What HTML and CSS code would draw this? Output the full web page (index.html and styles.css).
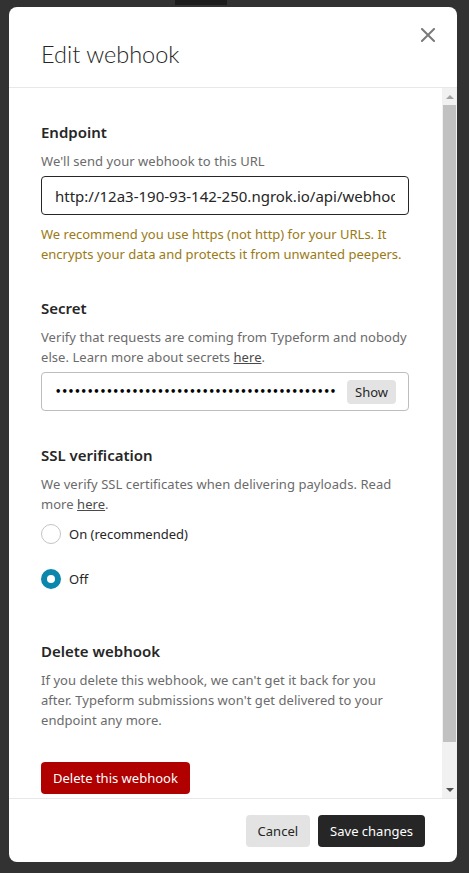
FILE: index.html
```html
<!DOCTYPE html>
<html lang="en">
<head>
    <meta charset="UTF-8">
    <meta name="viewport" content="width=device-width, initial-scale=1.0">
    <title>Edit webhook</title>
    <link rel="stylesheet" href="styles.css">
</head>
<body>

<div class="topbar"></div>

<div class="modal">
    <header class="modal-header">
        <h2 class="modal-title">Edit webhook</h2>
        <button class="close-button" aria-label="Close">
            <svg width="14" height="14" viewBox="0 0 14 14">
                <path d="M1 1 L13 13 M13 1 L1 13" stroke="#7a7a7a" stroke-width="2" stroke-linecap="square" fill="none"/>
            </svg>
        </button>
    </header>

    <div class="modal-body">
        <div class="scroll-content">
            <!-- Endpoint -->
            <section class="field">
                <h3 class="field-title">Endpoint</h3>
                <p class="field-desc">We'll send your webhook to this URL</p>
                <input class="text-input focused" type="text" value="http://12a3-190-93-142-250.ngrok.io/api/webhook">
                <p class="field-warning">We recommend you use https (not http) for your URLs. It encrypts your data and protects it from unwanted peepers.</p>
            </section>

            <!-- Secret -->
            <section class="field">
                <h3 class="field-title">Secret</h3>
                <p class="field-desc">Verify that requests are coming from Typeform and nobody else. Learn more about secrets <a href="#">here</a>.</p>
                <div class="secret-box">
                    <input class="secret-input" type="password" value="abcdefghijklmnopqrstuvwxyzabcdefghijklmnopqrstuvwxyz">
                    <button class="show-button">Show</button>
                </div>
            </section>

            <!-- SSL -->
            <section class="field ssl-field">
                <h3 class="field-title">SSL verification</h3>
                <p class="field-desc">We verify SSL certificates when delivering payloads. Read more <a href="#">here</a>.</p>
                <div class="radio-group">
                    <label class="radio">
                        <span class="radio-dot"></span>
                        On (recommended)
                    </label>
                    <label class="radio">
                        <span class="radio-dot checked"></span>
                        Off
                    </label>
                </div>
            </section>

            <!-- Delete -->
            <section class="field delete-field">
                <h3 class="field-title">Delete webhook</h3>
                <p class="field-desc">If you delete this webhook, we can't get it back for you after. Typeform submissions won't get delivered to your endpoint any more.</p>
                <button class="button danger">Delete this webhook</button>
            </section>
        </div>

        <div class="scrollbar">
            <div class="scroll-arrow up"></div>
            <div class="scroll-track">
                <div class="scroll-thumb"></div>
            </div>
            <div class="scroll-arrow down"></div>
        </div>
    </div>

    <footer class="modal-footer">
        <button class="button secondary">Cancel</button>
        <button class="button primary">Save changes</button>
    </footer>
</div>

</body>
</html>
```

FILE: styles.css
```css
html, body {
    margin: 0;
    height: 100%;
}

body {
    background-color: #323232;
    font-family: "Noto Sans", "Open Sans", sans-serif;
    color: #262626;
    padding: 7px 12px 11px 9px;
    box-sizing: border-box;
    position: relative;
}

.topbar {
    position: absolute;
    top: 0;
    left: 175px;
    width: 52px;
    height: 5px;
    background-color: #1c1c1c;
}

.modal {
    position: relative;
    width: 448px;
    height: 855px;
    background-color: #fff;
    border-radius: 8px;
    display: flex;
    flex-direction: column;
    overflow: hidden;
}

.modal-header {
    height: 80px;
    flex-shrink: 0;
    display: flex;
    justify-content: space-between;
    align-items: flex-start;
    padding: 0 22px 0 32px;
    border-bottom: 1px solid #e8e8e8;
}

.modal-title {
    margin: 32px 0 0 0;
    font-family: Lato, sans-serif;
    font-weight: 300;
    font-size: 23.5px;
    line-height: 30px;
    color: #262626;
}

.close-button {
    margin-top: 21px;
    padding: 0;
    border: none;
    background: none;
    width: 14px;
    height: 14px;
    cursor: pointer;
}

.close-button svg {
    display: block;
}

.modal-body {
    height: 710px;
    flex-shrink: 0;
    display: flex;
}

.scroll-content {
    flex: 1;
    min-width: 0;
    overflow: hidden;
    padding: 34px 33px 40px 32px;
}

/* fake classic scrollbar */
.scrollbar {
    width: 15px;
    flex-shrink: 0;
    background-color: #f1f1f1;
    display: flex;
    flex-direction: column;
}

.scroll-arrow {
    height: 17px;
    display: flex;
    align-items: center;
    justify-content: center;
}

.scroll-arrow::before {
    content: "";
    width: 0;
    height: 0;
    border-left: 4px solid transparent;
    border-right: 4px solid transparent;
}

.scroll-arrow.up::before {
    border-bottom: 4px solid #a3a3a3;
}

.scroll-arrow.down::before {
    border-top: 4px solid #505050;
}

.scroll-track {
    flex: 1;
    padding: 0 1px;
}

.scroll-thumb {
    height: 637px;
    background-color: #c1c1c1;
}

.field {
    margin-bottom: 34px;
}

.field-title {
    margin: 0 0 9px 0;
    font-size: 15px;
    font-weight: 600;
    line-height: 20px;
}

.field-desc {
    margin: 0 0 5px 0;
    font-size: 13px;
    line-height: 20px;
    color: #6b6b6b;
    letter-spacing: 0.05px;
}

.field-desc a {
    color: #4a4a4a;
}

.field-warning {
    margin: 9px 0 0 0;
    font-size: 13px;
    line-height: 20px;
    color: #9a7a14;
}

.text-input {
    display: block;
    width: 100%;
    height: 39px;
    box-sizing: border-box;
    padding: 0 13px;
    font-family: inherit;
    font-size: 15px;
    color: #262626;
    border: 1px solid #bdbdbd;
    border-radius: 4px;
    outline: none;
}

.text-input.focused {
    border-color: #262626;
}

.secret-box {
    display: flex;
    align-items: center;
    height: 39px;
    box-sizing: border-box;
    border: 1px solid #bdbdbd;
    border-radius: 4px;
    padding: 0 12px 0 13px;
}

.secret-input {
    flex: 1;
    min-width: 0;
    border: none;
    outline: none;
    padding: 0;
    font-family: "DejaVu Sans", sans-serif;
    font-weight: bold;
    font-size: 10px;
    color: #000;
}

.show-button {
    margin-left: 10px;
    height: 24px;
    padding: 0 8px;
    border: none;
    border-radius: 4px;
    background-color: #e3e3e3;
    font-family: inherit;
    font-size: 13px;
    color: #262626;
}

.ssl-field {
    margin-bottom: 52px;
}

.ssl-field .field-desc {
    margin-bottom: 0;
}

.radio-group {
    display: flex;
    flex-direction: column;
    gap: 25px;
    padding-top: 10px;
}

.radio {
    display: flex;
    align-items: center;
    gap: 8px;
    font-size: 13px;
    line-height: 20px;
    color: #262626;
}

.radio-dot {
    width: 20px;
    height: 20px;
    box-sizing: border-box;
    border: 1px solid #c4c4c4;
    border-radius: 50%;
}

.radio-dot.checked {
    border: 6px solid #0b87ad;
    background-color: #fff;
}

.delete-field {
    margin-bottom: 0;
}

.delete-field .field-desc {
    margin-bottom: 32px;
}

.button {
    height: 32px;
    padding: 0 12px;
    border: none;
    border-radius: 4px;
    font-family: inherit;
    font-size: 13px;
    cursor: pointer;
}

.button.danger {
    background-color: #b00000;
    color: #fff;
}

.button.secondary {
    background-color: #e3e3e3;
    color: #262626;
}

.button.primary {
    background-color: #262626;
    color: #fff;
}

.modal-footer {
    flex-shrink: 0;
    height: 65px;
    box-sizing: border-box;
    border-top: 1px solid #e8e8e8;
    display: flex;
    justify-content: flex-end;
    align-items: flex-start;
    gap: 8px;
    padding: 16px 32px 0 0;
}
```
